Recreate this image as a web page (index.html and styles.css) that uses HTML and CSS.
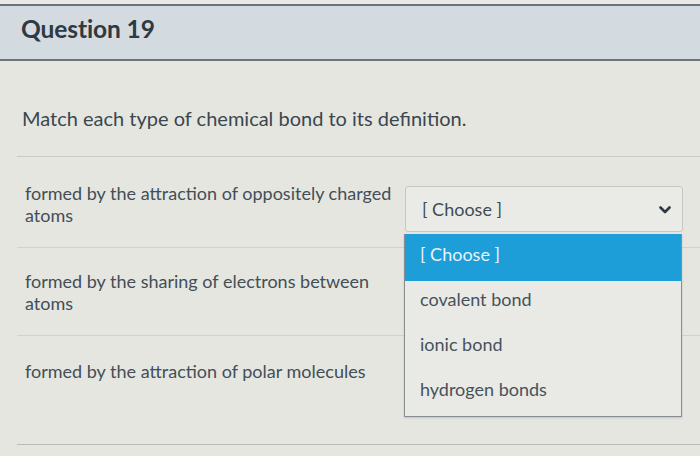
FILE: index.html
```html
<!DOCTYPE html>
<html lang="en">
<head>
<meta charset="utf-8">
<title>Question 19</title>
<link rel="stylesheet" href="styles.css">
</head>
<body>
<div class="page">
  <div class="top-strip"></div>
  <header class="q-header">
    <h2 class="q-title">Question 19</h2>
  </header>
  <div class="q-body">
    <p class="q-text">Match each type of chemical bond to its definition.</p>
    <div class="answers">
      <div class="row row-1">
        <div class="label">formed by the attraction of oppositely charged atoms</div>
        <div class="select-wrap">
          <div class="select">
            <span>[ Choose ]</span>
            <svg class="chev" width="12" height="8" viewBox="0 0 12 8"><polyline points="1.5,1.5 6,6 10.5,1.5" fill="none" stroke="#2f3840" stroke-width="2.6" stroke-linecap="round" stroke-linejoin="round"/></svg>
          </div>
          <ul class="menu">
            <li class="opt active">[ Choose ]</li>
            <li class="opt">covalent bond</li>
            <li class="opt">ionic bond</li>
            <li class="opt">hydrogen bonds</li>
          </ul>
        </div>
      </div>
      <div class="row row-2">
        <div class="label">formed by the sharing of electrons between atoms</div>
      </div>
      <div class="row row-3">
        <div class="label">formed by the attraction of polar molecules</div>
      </div>
    </div>
  </div>
</div>
</body>
</html>
```

FILE: styles.css
```css
* { box-sizing: border-box; }
html, body { margin: 0; padding: 0; }
body {
  background: #e5e6e0;
  font-family: Lato, "Open Sans", "Liberation Sans", sans-serif;
  color: #3f4a53;
  width: 700px;
  height: 456px;
  overflow: hidden;
}
.page { position: relative; height: 456px; }
.top-strip { height: 4px; background: #e9eae6; }
.q-header {
  background: #d4dbe0;
  border-top: 2px solid #6c7378;
  border-bottom: 2px solid #6c7378;
  height: 57px;
  display: flex;
  align-items: center;
  padding-left: 21px;
  padding-bottom: 8px;
}
.q-title {
  margin: 0;
  font-size: 24.5px;
  font-weight: 700;
  color: #2e3943;
  letter-spacing: -0.1px;
}
.q-body { padding-top: 44px; }
.q-text {
  margin: 0 0 0 22px;
  font-size: 20px;
  line-height: 26px;
  color: #3a4650;
}
.answers {
  margin: 25px 0 0 17px;
  border-top: 1px solid #c8cac6;
  border-bottom: 1px solid #b9bcb9;
}
.row {
  display: flex;
  align-items: flex-start;
  border-top: 1px solid #d0d2ce;
}
.row:first-child { border-top: none; }
.row-1 { height: 90px; padding-top: 25px; }
.row-2 { height: 88px; padding-top: 22px; }
.row-3 { height: 109px; padding-top: 24px; }
.label {
  width: 388px;
  flex: none;
  padding-left: 8px;
  padding-right: 8px;
  font-size: 18px;
  line-height: 22px;
  color: #434e57;
}
.select-wrap {
  position: relative;
  width: 278px;
  margin-top: 4px;
}
.select {
  height: 46px;
  border: 1px solid #c4c7c4;
  border-radius: 3px;
  background: #eaebe6;
  display: flex;
  align-items: center;
  justify-content: space-between;
  padding: 0 11px 0 16px;
  font-size: 18px;
  color: #404b54;
}
.chev { margin-top: 2px; }
.menu {
  position: absolute;
  top: 48px;
  left: -1px;
  width: 278px;
  margin: 0;
  padding: 0;
  list-style: none;
  background: #e9eae5;
  border: 1px solid #868e94;
  border-top: none;
  box-shadow: 0 1px 2px rgba(0,0,0,0.15);
}
.opt {
  height: 45px;
  padding: 7px 0 0 15px;
  font-size: 18px;
  line-height: 22px;
  color: #46525b;
}
.opt.active {
  height: 47px;
  padding-top: 9px;
  background: #1d9ed8;
  color: #e6f4fa;
}
```
